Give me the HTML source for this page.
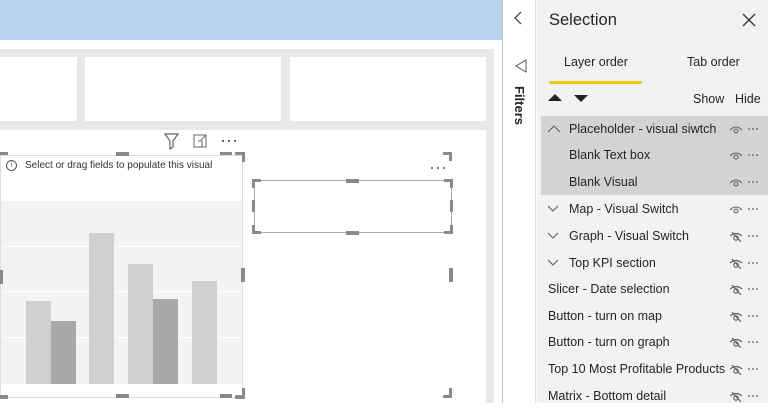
<!DOCTYPE html>
<html><head><style>
*{margin:0;padding:0;box-sizing:border-box}
body{width:768px;height:403px;overflow:hidden;position:relative;font-family:"Liberation Sans",sans-serif;background:#fff}
.a{position:absolute}
.row{position:absolute;left:541px;width:227px;height:27px;font-size:12.5px;color:#252423;line-height:27px}
.row .t{position:absolute}
.row svg.i{position:absolute;left:188px;top:7px}
.row svg.c{position:absolute;left:6px;top:9px}
.h{position:absolute;background:#8a8a8a}
</style></head><body>
<svg width="0" height="0" style="position:absolute"><defs>
<g id="eye"><path d="M1 7Q7 1 13 7" fill="none" stroke="#605e5c" stroke-width="1.1"/><circle cx="7" cy="8" r="2" fill="none" stroke="#605e5c" stroke-width="1.1"/><circle cx="20" cy="6" r=".9" fill="#605e5c"/><circle cx="24" cy="6" r=".9" fill="#605e5c"/><circle cx="28" cy="6" r=".9" fill="#605e5c"/></g>
<g id="noeye"><path d="M1 6Q7 1 13 6" fill="none" stroke="#605e5c" stroke-width="1.1"/><circle cx="7" cy="8" r="2.2" fill="none" stroke="#605e5c" stroke-width="1.1"/><path d="M3 2l9 10" stroke="#605e5c" stroke-width="1.1"/><circle cx="20" cy="6" r=".9" fill="#605e5c"/><circle cx="24" cy="6" r=".9" fill="#605e5c"/><circle cx="28" cy="6" r=".9" fill="#605e5c"/></g>
<g id="dn"><path d="M1 1l5 5 5-5" fill="none" stroke="#605e5c" stroke-width="1.1"/></g>
</defs></svg>
<div class="a" style="left:0;top:0;width:502px;height:40px;background:#b8d3ef"></div>
<div class="a" style="left:0;top:49px;width:494px;height:354px;background:#e8e8e8"></div>
<div class="a" style="left:0;top:57px;width:77px;height:64px;background:#fff"></div>
<div class="a" style="left:85px;top:57px;width:196px;height:64px;background:#fff"></div>
<div class="a" style="left:290px;top:57px;width:196px;height:64px;background:#fff"></div>
<div class="a" style="left:0;top:130px;width:486px;height:273px;background:#fff"></div>
<div class="a" style="left:502px;top:0;width:1px;height:403px;background:#c8c8c8"></div>
<svg class="a" style="left:160px;top:131px" width="80" height="20"><path d="M5 3h13l-5 7v6l-3 2v-8z" fill="none" stroke="#666" stroke-width="1.2"/><path d="M34 4h12v12h-12z M38 10h4v6h-8" fill="none" stroke="#666"/><path d="M41 9l5-5M43 4h3v3" stroke="#666" fill="none"/><circle cx="63" cy="10" r="1.1" fill="#555"/><circle cx="69" cy="10" r="1.1" fill="#555"/><circle cx="75" cy="10" r="1.1" fill="#555"/></svg>
<div class="a" style="left:0;top:155px;width:243px;height:243px;border:1px solid #ddd;background:#fff"></div>
<div class="a" style="left:1px;top:201px;width:241px;height:183px;background:#f3f3f3"></div>
<div class="a" style="left:1px;top:246px;width:241px;height:1px;background:#fff"></div>
<div class="a" style="left:1px;top:291px;width:241px;height:1px;background:#fff"></div>
<div class="a" style="left:1px;top:337px;width:241px;height:1px;background:#fff"></div>
<div class="a" style="left:26px;top:301px;width:25px;height:83px;background:#d0d0d1"></div>
<div class="a" style="left:51px;top:321px;width:25px;height:63px;background:#a9a9a9"></div>
<div class="a" style="left:89px;top:233px;width:25px;height:151px;background:#d0d0d1"></div>
<div class="a" style="left:128px;top:264px;width:25px;height:120px;background:#d0d0d1"></div>
<div class="a" style="left:153px;top:299px;width:25px;height:85px;background:#a9a9a9"></div>
<div class="a" style="left:192px;top:281px;width:25px;height:103px;background:#d0d0d1"></div>
<div class="a" style="left:6px;top:160px;width:11px;height:11px;border:1px solid #555;border-radius:50%;font-size:7px;text-align:center;line-height:9px;color:#555">i</div>
<div class="a" style="left:25px;top:160px;font-size:10px;color:#333">Select or drag fields to populate this visual</div>
<div class="h" style="left:0;top:152px;width:8px;height:3px"></div>
<div class="h" style="left:116px;top:152px;width:13px;height:4px"></div>
<div class="h" style="left:220px;top:152px;width:12px;height:3px"></div>
<div class="h" style="left:235px;top:152px;width:10px;height:3px"></div><div class="h" style="left:242px;top:152px;width:3px;height:10px"></div>
<div class="h" style="left:0;top:270px;width:3px;height:14px"></div>
<div class="h" style="left:241px;top:268px;width:4px;height:14px"></div>
<div class="h" style="left:0;top:395px;width:8px;height:4px"></div>
<div class="h" style="left:116px;top:394px;width:13px;height:4px"></div>
<div class="h" style="left:220px;top:394px;width:12px;height:4px"></div>
<div class="h" style="left:235px;top:395px;width:10px;height:4px"></div><div class="h" style="left:242px;top:388px;width:3px;height:10px"></div>
<svg class="a" style="left:428px;top:162px" width="20" height="10"><circle cx="4" cy="6" r="1" fill="#555"/><circle cx="10" cy="6" r="1" fill="#555"/><circle cx="16" cy="6" r="1" fill="#555"/></svg>
<div class="h" style="left:443px;top:152px;width:9px;height:3px"></div><div class="h" style="left:449px;top:152px;width:3px;height:9px"></div>
<div class="h" style="left:449px;top:268px;width:4px;height:14px"></div>
<div class="h" style="left:443px;top:395px;width:9px;height:3px"></div><div class="h" style="left:449px;top:388px;width:3px;height:10px"></div>
<div class="a" style="left:254px;top:180px;width:198px;height:53px;border:1px solid #aaa"></div>
<div class="h" style="left:252px;top:179px;width:9px;height:3px"></div><div class="h" style="left:252px;top:179px;width:3px;height:9px"></div>
<div class="h" style="left:346px;top:179px;width:13px;height:4px"></div>
<div class="h" style="left:444px;top:179px;width:9px;height:3px"></div><div class="h" style="left:450px;top:179px;width:3px;height:9px"></div>
<div class="h" style="left:252px;top:200px;width:3px;height:12px"></div>
<div class="h" style="left:450px;top:200px;width:3px;height:12px"></div>
<div class="h" style="left:252px;top:231px;width:9px;height:3px"></div><div class="h" style="left:252px;top:225px;width:3px;height:9px"></div>
<div class="h" style="left:346px;top:231px;width:13px;height:4px"></div>
<div class="h" style="left:444px;top:231px;width:9px;height:3px"></div><div class="h" style="left:450px;top:225px;width:3px;height:9px"></div>
<div class="a" style="left:503px;top:0;width:33px;height:403px;background:#fff;border-right:1px solid #e1dfdd"></div>
<svg class="a" style="left:512px;top:10px" width="14" height="16"><path d="M9 2L3 8l6 6" fill="none" stroke="#333" stroke-width="1.2"/></svg>
<svg class="a" style="left:514px;top:58px" width="14" height="16"><path d="M12 2v12L2 8z" fill="none" stroke="#555"/></svg>
<div class="a" style="left:511px;top:86px;font-size:13px;font-weight:bold;color:#252423;transform-origin:0 0;transform:translate(16px,0) rotate(90deg)">Filters</div>
<div class="a" style="left:537px;top:0;width:231px;height:403px;background:#f3f2f1"></div>
<div class="a" style="left:549px;top:11px;font-size:16.5px;color:#252423">Selection</div>
<svg class="a" style="left:741px;top:12px" width="16" height="16"><path d="M2 2l12 12M14 2L2 14" stroke="#333" stroke-width="1.3"/></svg>
<div class="a" style="left:564px;top:55px;font-size:12.5px;color:#252423">Layer order</div>
<div class="a" style="left:687px;top:55px;font-size:12.5px;color:#252423">Tab order</div>
<div class="a" style="left:549px;top:81px;width:93px;height:3px;background:#f2c811;border-radius:2px"></div>
<svg class="a" style="left:547px;top:92px" width="45" height="12"><path d="M1 9l7-7 7 7z" fill="#222"/><path d="M27 3h14l-7 7z" fill="#222"/></svg>
<div class="a" style="left:693px;top:92px;font-size:12.5px;color:#252423">Show</div>
<div class="a" style="left:735px;top:92px;font-size:12.5px;color:#252423">Hide</div>
<div class="a" style="left:541px;top:116px;width:227px;height:79px;background:#d4d3d2"></div>
<div class="row" style="top:116px"><svg class="c" width="14" height="8"><path d="M1 7l6-6 6 6" fill="none" stroke="#605e5c" stroke-width="1.1"/></svg><span class="t" style="left:28px">Placeholder - visual siwtch</span><svg class="i" width="32" height="12"><use href="#eye"/></svg></div>
<div class="row" style="top:142px"><span class="t" style="left:28px">Blank Text box</span><svg class="i" width="32" height="12"><use href="#eye"/></svg></div>
<div class="row" style="top:169px"><span class="t" style="left:28px">Blank Visual</span><svg class="i" width="32" height="12"><use href="#eye"/></svg></div>
<div class="row" style="top:196px"><svg class="c" width="14" height="8"><use href="#dn"/></svg><span class="t" style="left:28px">Map - Visual Switch</span><svg class="i" width="32" height="12"><use href="#eye"/></svg></div>
<div class="row" style="top:223px"><svg class="c" width="14" height="8"><use href="#dn"/></svg><span class="t" style="left:28px">Graph - Visual Switch</span><svg class="i" width="32" height="12"><use href="#noeye"/></svg></div>
<div class="row" style="top:250px"><svg class="c" width="14" height="8"><use href="#dn"/></svg><span class="t" style="left:28px">Top KPI section</span><svg class="i" width="32" height="12"><use href="#noeye"/></svg></div>
<div class="row" style="top:276px"><span class="t" style="left:7px">Slicer - Date selection</span><svg class="i" width="32" height="12"><use href="#noeye"/></svg></div>
<div class="row" style="top:303px"><span class="t" style="left:7px">Button - turn on map</span><svg class="i" width="32" height="12"><use href="#noeye"/></svg></div>
<div class="row" style="top:329px"><span class="t" style="left:7px">Button - turn on graph</span><svg class="i" width="32" height="12"><use href="#noeye"/></svg></div>
<div class="row" style="top:356px"><span class="t" style="left:7px">Top 10 Most Profitable Products</span><svg class="i" width="32" height="12"><use href="#noeye"/></svg></div>
<div class="row" style="top:383px"><span class="t" style="left:7px">Matrix - Bottom detail</span><svg class="i" width="32" height="12"><use href="#noeye"/></svg></div>
</body></html>
